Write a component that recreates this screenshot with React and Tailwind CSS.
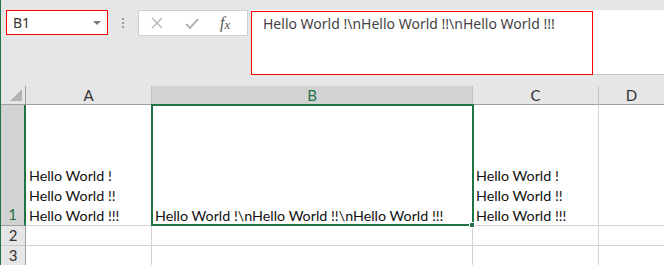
import React from "react"

const cellFont = { fontFamily: "Lato, 'Liberation Sans', sans-serif" }

const lines = ["Hello World !", "Hello World !!", "Hello World !!!"]

function StackedText() {
  return (
    <div className="flex h-full flex-col justify-end pl-[3px] text-[14.3px] leading-[20px] text-[#111]" style={cellFont}>
      <div className="mb-[-1px]">
        {lines.map((l) => (
          <div key={l} className="whitespace-nowrap">{l}</div>
        ))}
      </div>
    </div>
  )
}

export default function App() {
  return (
    <div className="h-[265px] w-[664px] overflow-hidden border-l border-[#217346] bg-white" style={{ fontFamily: "'Open Sans', 'Noto Sans', sans-serif" }}>
      {/* formula bar */}
      <div className="flex h-[86px] items-start bg-[#e6e6e6] pt-[10px]">
        <div className="ml-[5px] flex h-[25px] w-[102px] items-center justify-between border border-[#ff0000] bg-white pl-[6px] pr-[6px]">
          <span className="text-[14px] text-[#333]" style={{ fontFamily: "'Noto Sans', sans-serif" }}>B1</span>
          <svg width="8" height="4" viewBox="0 0 8 4"><path d="M0 0h8L4 4z" fill="#7a7a7a" /></svg>
        </div>
        <div className="ml-[14px] mt-[8px] flex flex-col gap-[2px]">
          <span className="h-[2px] w-[2px] bg-[#9a9a9a]" />
          <span className="h-[2px] w-[2px] bg-[#9a9a9a]" />
          <span className="h-[2px] w-[2px] bg-[#9a9a9a]" />
        </div>
        <div className="ml-[14px] flex h-[26px] w-[110px] items-center border border-[#d0d0d0] bg-white">
          <svg className="ml-[12px]" width="12" height="12" viewBox="0 0 12 12">
            <path d="M1 1L11 11M11 1L1 11" stroke="#b5b5b5" strokeWidth="1.3" />
          </svg>
          <svg className="ml-[22px]" width="14" height="11" viewBox="0 0 14 11">
            <path d="M1 6l4 4L13 1" stroke="#b5b5b5" strokeWidth="2" fill="none" />
          </svg>
          <span className="ml-[21px] text-[16px] italic leading-none text-[#555]" style={{ fontFamily: "'Liberation Serif', serif" }}>
            f<span className="relative top-[1px] text-[13px]">x</span>
          </span>
        </div>
        <div className="ml-[3px] flex h-[65px] flex-1 border-b border-[#c6c6c6] bg-white">
          <div className="mt-[1px] h-[64px] w-[342px] border border-[#ff0000] pl-[11px] pt-[1px] text-[14px] text-[#444]" style={{ fontFamily: "'Noto Sans', sans-serif" }}>
            Hello World !\nHello World !!\nHello World !!!
          </div>
        </div>
      </div>

      {/* grid */}
      <div className="grid grid-cols-[25px_126px_321px_126px_1fr] grid-rows-[19px_121px_20px_20px]" style={cellFont}>
        {/* header row */}
        <div className="relative border-b border-r border-[#9f9f9f] bg-[#e6e6e6]">
          <svg className="absolute bottom-[3px] right-[3px]" width="12" height="12" viewBox="0 0 12 12"><path d="M12 0V12H0z" fill="#b4b4b4" /></svg>
        </div>
        <div className="flex items-center justify-center border-b border-r border-[#9f9f9f] border-r-[#c4c4c4] bg-[#e6e6e6] text-[15px] text-[#333]">A</div>
        <div className="flex items-center justify-center border-b border-r border-[#217346] border-r-[#c4c4c4] bg-[#d2d2d2] text-[15px] text-[#217346]">B</div>
        <div className="flex items-center justify-center border-b border-r border-[#9f9f9f] border-r-[#c4c4c4] bg-[#e6e6e6] text-[15px] text-[#333]">C</div>
        <div className="flex items-center justify-center border-b border-[#9f9f9f] bg-[#e6e6e6] text-[15px] text-[#333]">D</div>

        {/* row 1 */}
        <div className="flex items-end justify-center border-b border-r-2 border-b-[#9f9f9f] border-r-[#217346] bg-[#d2d2d2] pb-[1px] text-[15px] leading-[20px] text-[#217346]">1</div>
        <div className="border-b border-r border-[#d4d4d4]">
          <StackedText />
        </div>
        <div className="relative border-b border-r border-[#d4d4d4]">
          <div className="flex h-full flex-col justify-end pl-[3px] text-[14.3px] leading-[20px] text-[#111]">
            <div className="mb-[-1px] whitespace-nowrap">Hello World !\nHello World !!\nHello World !!!</div>
          </div>
          <div className="absolute -left-[1px] -top-[1px] h-[122px] w-[323px] border-2 border-[#217346]" />
          <div className="absolute -bottom-[3px] -right-[3px] h-[6px] w-[6px] border border-white bg-[#217346]" />
        </div>
        <div className="border-b border-r border-[#d4d4d4]">
          <StackedText />
        </div>
        <div className="border-b border-[#d4d4d4]" />

        {/* rows 2, 3 */}
        {["2", "3"].map((n) => (
          <React.Fragment key={n}>
            <div className="flex items-center justify-center border-b border-r border-b-[#c8c8c8] border-r-[#9f9f9f] bg-[#e6e6e6] text-[15px] text-[#333]">{n}</div>
            <div className="border-b border-r border-[#d4d4d4]" />
            <div className="border-b border-r border-[#d4d4d4]" />
            <div className="border-b border-r border-[#d4d4d4]" />
            <div className="border-b border-[#d4d4d4]" />
          </React.Fragment>
        ))}
      </div>
    </div>
  )
}
